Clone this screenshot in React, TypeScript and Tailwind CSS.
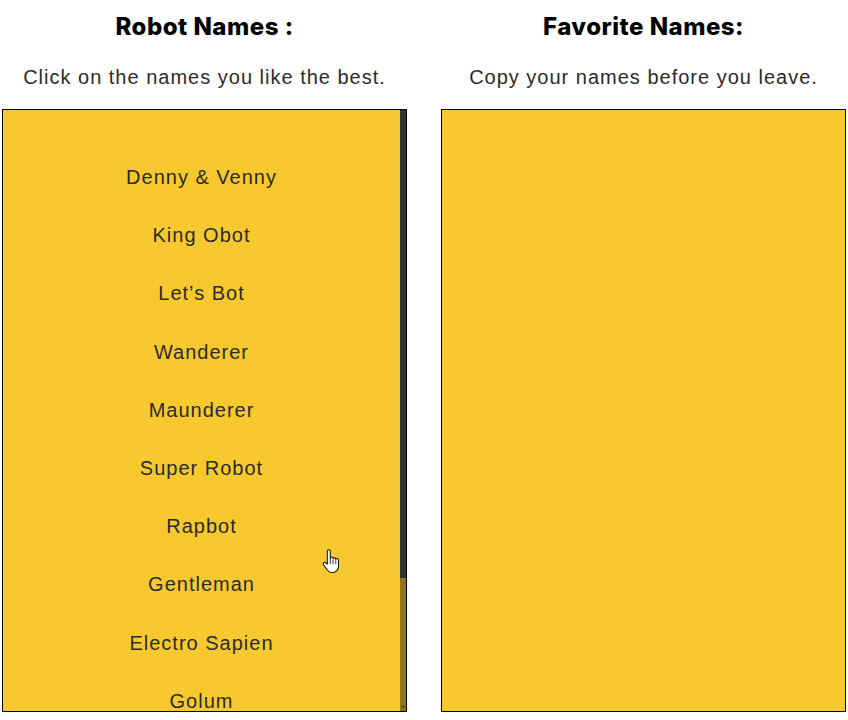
import { useState } from 'react'

const robotNames = [
  'Denny & Venny',
  'King Obot',
  'Let’s Bot',
  'Wanderer',
  'Maunderer',
  'Super Robot',
  'Rapbot',
  'Gentleman',
  'Electro Sapien',
  'Golum',
  'Tin Tin',
  'Sparky',
]

function PointerHand() {
  return (
    <svg width="19" height="25" viewBox="0 0 18 24" className="pointer-events-none absolute left-[319px] top-[439px]">
      <path
        d="M5 2.2c0-.9.7-1.5 1.4-1.5S7.8 1.3 7.8 2.2V9c0-.8.6-1.3 1.3-1.3.8 0 1.4.5 1.4 1.3v.6c0-.8.6-1.3 1.3-1.3s1.3.5 1.3 1.3v.8c0-.8.6-1.3 1.3-1.3s1.3.5 1.3 1.3v6.2c0 3.3-2.2 5.9-5.3 5.9H9.3c-1.8 0-3.2-.8-4.3-2.3L1.3 15c-.5-.7-.3-1.6.4-2 .6-.4 1.3-.3 1.8.2L5 14.6Z"
        fill="#fff"
        stroke="#111"
        strokeWidth="1"
        strokeLinejoin="round"
      />
      <path d="M10.5 10.5v4M13.1 11v3.6M7.8 9v5.5" stroke="#111" strokeWidth="0.8" />
    </svg>
  )
}

export default function App() {
  const [favorites, setFavorites] = useState<string[]>([])

  return (
    <div className="min-h-screen bg-white px-[2px] font-['Liberation_Sans',sans-serif] text-[#2b2b2b]">
      <div className="grid grid-cols-2 gap-[34px]">
        {/* Robot names */}
        <section className="flex flex-col items-center">
          <h2 className="mt-[12px] font-['Inter',sans-serif] text-[24px] leading-[30px] font-extrabold tracking-[0.5px] text-black">
            Robot Names :
          </h2>
          <p className="mt-[22px] text-[20px] leading-[26px] tracking-[1px]">Click on the names you like the best.</p>
          <div className="relative mt-[19px] flex h-[603px] w-full border border-black bg-[#f8c92e]">
            <ul className="h-full flex-1 overflow-hidden pt-[38px]">
              {robotNames.map((name) => (
                <li
                  key={name}
                  onClick={() => setFavorites((f) => (f.includes(name) ? f : [...f, name]))}
                  className="flex h-[58.2px] cursor-pointer items-center justify-center text-[20px] tracking-[1px]"
                >
                  {name}
                </li>
              ))}
            </ul>
            {/* scrollbar */}
            <div className="flex w-[6px] flex-col">
              <div className="h-[468px] bg-[#333333]" />
              <div className="flex flex-1 items-end justify-center bg-[#90751b]">
                <span className="mb-[1px] text-[6px] leading-none text-[#5c4a12]">▼</span>
              </div>
            </div>
            <PointerHand />
          </div>
        </section>

        {/* Favorites */}
        <section className="flex flex-col items-center">
          <h2 className="mt-[12px] font-['Inter',sans-serif] text-[24px] leading-[30px] font-extrabold tracking-[0.5px] text-black">
            Favorite Names:
          </h2>
          <p className="mt-[22px] text-[20px] leading-[26px] tracking-[1px]">Copy your names before you leave.</p>
          <div className="mt-[19px] h-[603px] w-full border border-black bg-[#f8c92e] pt-[38px]">
            {favorites.map((name) => (
              <div key={name} className="flex h-[58.2px] items-center justify-center text-[20px] tracking-[1px]">
                {name}
              </div>
            ))}
          </div>
        </section>
      </div>
    </div>
  )
}
